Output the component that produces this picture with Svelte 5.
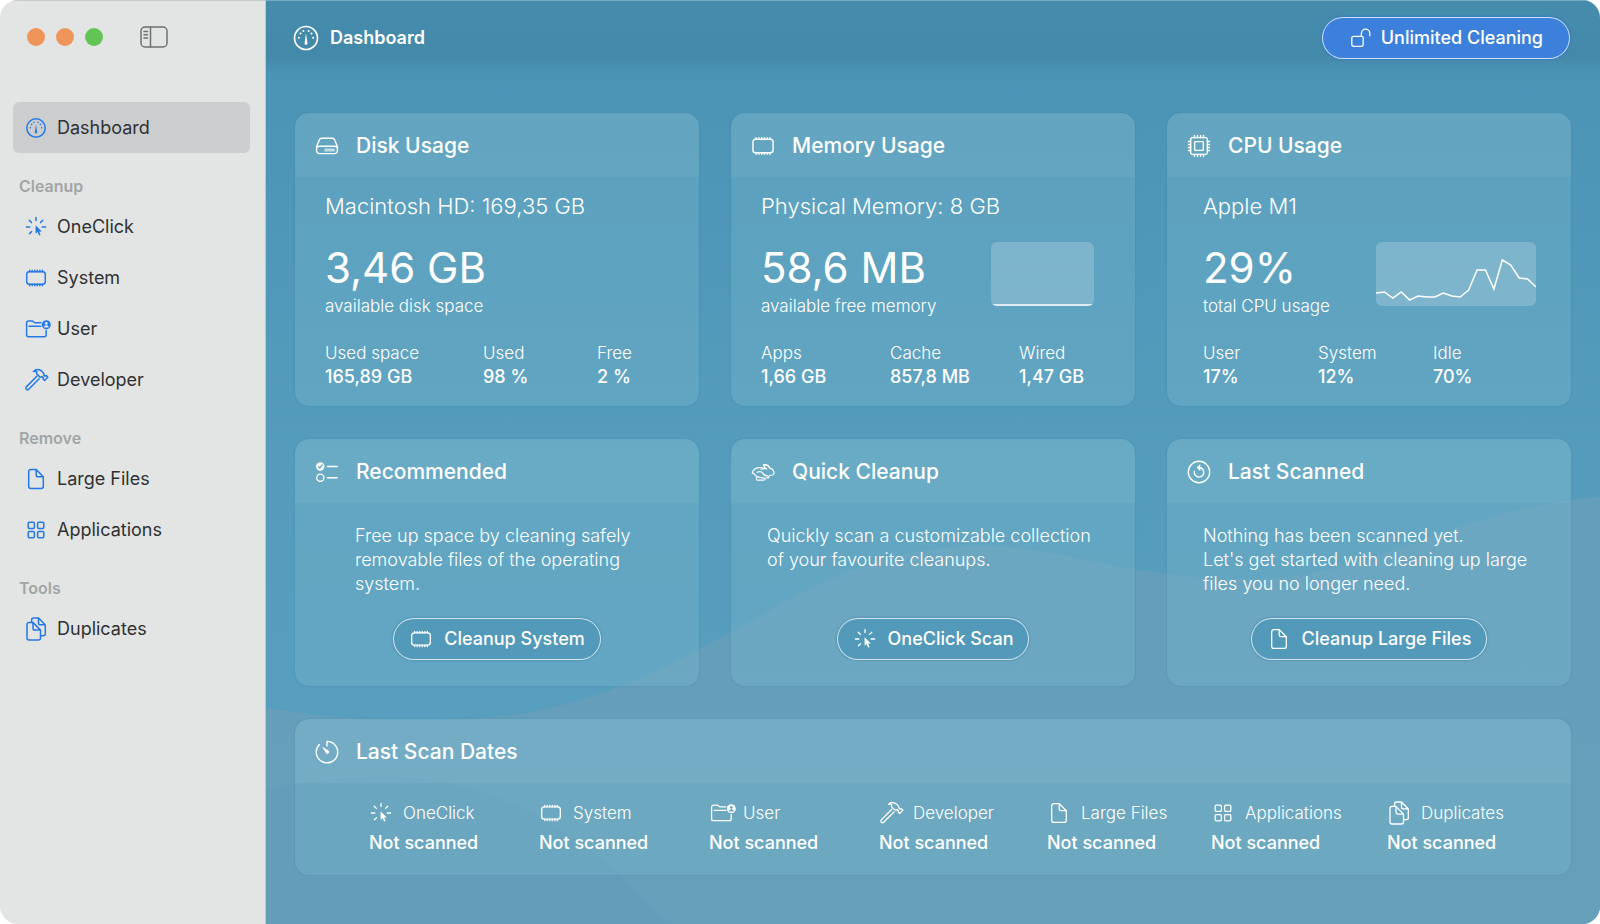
<script>
  const navGroups = [
    { title: '', items: [{ icon: 'gauge', label: 'Dashboard' }] },
    {
      title: 'Cleanup',
      items: [
        { icon: 'click', label: 'OneClick' },
        { icon: 'memory', label: 'System' },
        { icon: 'folder', label: 'User' },
        { icon: 'hammer', label: 'Developer' }
      ]
    },
    {
      title: 'Remove',
      items: [
        { icon: 'doc', label: 'Large Files' },
        { icon: 'apps', label: 'Applications' }
      ]
    },
    { title: 'Tools', items: [{ icon: 'docs', label: 'Duplicates' }] }
  ];

  const usage = [
    {
      id: 'disk',
      icon: 'drive',
      title: 'Disk Usage',
      source: 'Macintosh HD: 169,35 GB',
      value: '3,46 GB',
      caption: 'available disk space',
      stats: [['Used space', '165,89 GB'], ['Used', '98 %'], ['Free', '2 %']]
    },
    {
      id: 'memory',
      icon: 'memory',
      title: 'Memory Usage',
      source: 'Physical Memory: 8 GB',
      value: '58,6 MB',
      caption: 'available free memory',
      stats: [['Apps', '1,66 GB'], ['Cache', '857,8 MB'], ['Wired', '1,47 GB']],
      history: [1, 1]
    },
    {
      id: 'cpu',
      icon: 'cpu',
      title: 'CPU Usage',
      source: 'Apple M1',
      value: '29%',
      caption: 'total CPU usage',
      stats: [['User', '17%'], ['System', '12%'], ['Idle', '70%']],
      history: [13, 14, 8, 14, 6, 10, 9, 9, 13, 10, 9, 16, 36, 36, 17, 46, 41, 28, 27, 19]
    }
  ];

  const actions = [
    {
      id: 'recommended',
      icon: 'checklist',
      title: 'Recommended',
      text: 'Free up space by cleaning safely removable files of the operating system.',
      button: 'Cleanup System',
      buttonIcon: 'memory'
    },
    {
      id: 'quick',
      icon: 'hare',
      title: 'Quick Cleanup',
      text: 'Quickly scan a customizable collection of your favourite cleanups.',
      button: 'OneClick Scan',
      buttonIcon: 'click'
    },
    {
      id: 'last',
      icon: 'rescan',
      title: 'Last Scanned',
      text: "Nothing has been scanned yet.\nLet's get started with cleaning up large files you no longer need.",
      button: 'Cleanup Large Files',
      buttonIcon: 'doc'
    }
  ];

  const scans = navGroups.slice(1).flatMap((group) => group.items);

  let active = $state('Dashboard');

  // values are out of 64, newest sample on the right
  function toPoints(history) {
    const step = 160 / (history.length - 1);
    return history.map((v, i) => `${i * step},${64 - v}`).join(' ');
  }
</script>

{#snippet icon(name)}
  <svg class="icon" viewBox="0 0 24 24" aria-hidden="true">
    {#if name === 'gauge'}
      <circle cx="12" cy="12" r="9.2" />
      <path class="solid" d="M12 8.2l1.1 7.6a1.2 1.2 0 1 1-2.2 0z" />
      <path class="dots" d="M6.3 11.8h.01M7.6 8.4h.01M9.9 6.3h.01M14.1 6.3h.01M16.4 8.4h.01M17.7 11.8h.01" />
    {:else if name === 'click'}
      <path d="M12 2.6v3M5.2 5.2l2.2 2.2M18.8 5.2l-2.2 2.2M2.4 12h3.4M18.2 12h3.4M5.4 18.8l2.2-2.2" />
      <path class="solid" d="M11.6 10.2v8.6l2-1.8 1.5 3.6 1.5-.6-1.5-3.6h2.7z" />
    {:else if name === 'memory'}
      <rect x="2.7" y="5.8" width="18.6" height="12.4" rx="2.6" />
      <path d="M5.6 5.8V4.3M8.2 5.8V4.3M10.8 5.8V4.3M13.3 5.8V4.3M15.9 5.8V4.3M18.4 5.8V4.3M5.6 18.2v1.5M8.2 18.2v1.5M10.8 18.2v1.5M13.3 18.2v1.5M15.9 18.2v1.5M18.4 18.2v1.5" />
    {:else if name === 'folder'}
      <path d="M17 5.8H11c-1.200 0-1.600-1.700-3-1.700H4.600a2 2 0 0 0-2 2v11.600a2 2 0 0 0 2 2h15.600a2 2 0 0 0 2-2V13.600M5 9.300h11.800" />
      <circle class="solid" cx="22.300" cy="7.800" r="4.500" />
      <circle class="cut" cx="22.300" cy="6.400" r="1.400" />
      <path class="cut" d="M19.800 10.600c.3-1.700 1.300-2.300 2.500-2.300s2.200.6 2.500 2.300z" />
    {:else if name === 'hammer'}
      <path d="M12.800 8.200L2.300 18.900a1.700 1.700 0 0 0 0 2.300 1.700 1.700 0 0 0 2.400 0L15.200 10.800" />
      <path d="M9.400 3.400c2.600-2.700 6.200-2.300 8.500 0l1.600 1.700c.6.600.5 1.400.3 2l1.500 1.100 1-.6 1.600 1.600-3.300 3.300-1.500-1.500.4-1.100-1.400-1.300c-.9.500-1.700.8-2.600 0l-2.600-2.500c-.8-.9-.4-1.600 0-2.400-1.300-.7-2.300-.7-3.500-.3z" />
    {:else if name === 'doc'}
      <path d="M12.200 2.600H6.900a2.200 2.200 0 0 0-2.200 2.200v14.400a2.200 2.200 0 0 0 2.200 2.200h10.200a2.200 2.200 0 0 0 2.200-2.200V9.700z" />
      <path d="M12.200 2.600v5.300c0 1.200.6 1.800 1.800 1.800h5.300" />
    {:else if name === 'apps'}
      <rect x="4.200" y="4.200" width="6.200" height="6.200" rx="1.200" />
      <rect x="13.600" y="4.200" width="6.200" height="6.200" rx="1.200" />
      <rect x="4.200" y="13.600" width="6.200" height="6.200" rx="1.200" />
      <rect x="13.600" y="13.600" width="6.200" height="6.200" rx="1.200" />
    {:else if name === 'docs'}
      <path d="M8.800 5.400H5a2 2 0 0 0-2 2V21a2 2 0 0 0 2 2h9.500a2 2 0 0 0 2-2v-7.900z" />
      <path d="M9 5.600v5.700c0 1.200.6 1.800 1.800 1.800h5.500" />
      <path d="M7.600 5.200V3a2 2 0 0 1 2-2h4.900l6.800 7v8.700a2 2 0 0 1-2 2h-2.600M14.500 1.200v4.700c0 1.200.6 1.900 1.800 1.900h4.800" />
    {:else if name === 'drive'}
      <path d="M6.900 4.900h10.200c1 0 1.500.4 1.900 1.300l2.600 6.200v4a2.600 2.600 0 0 1-2.600 2.600H5a2.600 2.600 0 0 1-2.600-2.600v-4L5 6.200c.4-.9.900-1.300 1.900-1.300z" />
      <path d="M2.600 13.400c.6-.9 1.400-1.200 2.400-1.200h14c1 0 1.800.3 2.400 1.200" />
      <path class="solid faded" d="M9.600 14.400h9.600v2.600H9.600z" />
    {:else if name === 'cpu'}
      <rect x="4.300" y="4.300" width="15.400" height="15.400" rx="1.600" />
      <rect x="8" y="8" width="8" height="8" rx=".6" />
      <path d="M7.800 4.300v-2M10.600 4.300v-2M13.400 4.300v-2M16.200 4.300v-2M7.800 21.700v-2M10.600 21.700v-2M13.400 21.700v-2M16.200 21.700v-2M4.300 7.800h-2M4.300 10.600h-2M4.300 13.400h-2M4.300 16.200h-2M21.700 7.800h-2M21.700 10.600h-2M21.700 13.400h-2M21.700 16.200h-2" />
    {:else if name === 'checklist'}
      <circle class="solid" cx="5.800" cy="6.900" r="3.900" />
      <path class="tick" d="M4.200 7.100l1.200 1.300 2.100-3" />
      <circle cx="5.800" cy="17.300" r="3.300" />
      <path d="M12.400 6.900h9M12.400 17.300h9" />
    {:else if name === 'hare'}
      <g class="fine">
        <path d="M2.200 12.800c.5-3.100 3.200-4.500 6.200-4.800 2-.2 3.300.2 4.700 1 .8-.1 1.700 0 2.400.2-1.700-.8-2.900-2-3.200-3.700 2.500-.5 4.800 1 6 3 2.300.3 3.500 2.100 3.900 4.200.2 1.500-1.100 2.300-2.500 2.300-1 0-1.700.4-2.300 1.100l-.3 1.300h-2.400" />
        <path d="M13.300 5.400c1.700-.9 3.900.4 4.900 2.700" />
        <path d="M2.200 12.800c1.200.1 1.500.7 2.400 1.800 1 1.300 2 1.900 3.600 2.200l4.600.8c1.200.3 1.700 1.900-.2 1.900H7c-1.200 0-1.600-1.500-.6-2.500" />
        <path d="M6.600 12.200c2.200-1.300 4.600-.4 5.500 1.300.7 1.500 2 2.100 4.200 2M12.800 9c-1 0-1.700.1-2.500.3" />
      </g>
    {:else if name === 'rescan'}
      <circle cx="12" cy="12" r="9.900" />
      <path d="M7.700 11.600a4.400 4.400 0 1 0 4.600-3.700h-1.100M12.800 5.700l-2.100 2.200 2.100 2.100" />
    {:else if name === 'timer'}
      <path d="M12 6.400V2.200a9.900 9.900 0 1 1-7 2.900" />
      <path class="solid" d="M7.300 7l5.900 3.700a1.600 1.600 0 1 1-2.200 2.200z" />
    {:else if name === 'unlock'}
      <rect x="2.800" y="10.300" width="11.400" height="10" rx="1.800" />
      <path d="M12.400 10.200V7.400a4.200 4.200 0 0 1 8.400 0v2.400" />
    {/if}
  </svg>
{/snippet}

<div class="window">
  <aside class="sidebar">
    <div class="titlebar">
      <button class="light close" aria-label="Close"></button>
      <button class="light minimize" aria-label="Minimize"></button>
      <button class="light zoom" aria-label="Zoom"></button>
      <button class="toggle" aria-label="Toggle sidebar">
        <svg width="28" height="22" viewBox="0 0 28 22">
          <rect x="1" y="1" width="26" height="20" rx="4" />
          <path d="M10.500 1v20M4 5.500h3.500M4 8.800h3.500M4 12.100h3.500" />
        </svg>
      </button>
    </div>

    <nav>
      {#each navGroups as group}
        {#if group.title}
          <h2>{group.title}</h2>
        {/if}
        <ul>
          {#each group.items as item}
            <li>
              <a
                href="#{item.icon}"
                class:active={active === item.label}
                onclick={() => (active = item.label)}
              >
                {@render icon(item.icon)}
                {item.label}
              </a>
            </li>
          {/each}
        </ul>
      {/each}
    </nav>
  </aside>

  <main>
    <svg class="waves" viewBox="0 0 1334 924" preserveAspectRatio="none" aria-hidden="true">
      <path
        class="wave"
        d="M0 708C80 722 180 724 254 714C340 700 400 666 454 638C530 598 600 546 714 546C800 546 860 579 984 579C1110 579 1180 510 1334 497V924H0z"
      />
      <path class="wave-soft" d="M0 790C100 770 180 770 260 810C330 845 370 890 400 924H0z" />
    </svg>

    <header class="topbar">
      <h1>{@render icon('gauge')}Dashboard</h1>
      <button class="pill upgrade">{@render icon('unlock')}Unlimited Cleaning</button>
    </header>

    <div class="cards">
      {#each usage as card}
        <section class="card {card.id}">
          <h2>{@render icon(card.icon)}{card.title}</h2>
          <div class="usage">
            <p class="source">{card.source}</p>
            <div class="reading">
              <div>
                <p class="value">{card.value}</p>
                <p class="caption">{card.caption}</p>
              </div>
              {#if card.history}
                <svg class="chart" viewBox="0 0 160 64" preserveAspectRatio="none" role="img" aria-label="{card.title} history">
                  <polyline points={toPoints(card.history)} />
                </svg>
              {/if}
            </div>
            <dl>
              {#each card.stats as [label, amount]}
                <div>
                  <dt>{label}</dt>
                  <dd>{amount}</dd>
                </div>
              {/each}
            </dl>
          </div>
        </section>
      {/each}

      {#each actions as card}
        <section class="card {card.id}">
          <h2>{@render icon(card.icon)}{card.title}</h2>
          <div class="action">
            <p>{card.text}</p>
            <button class="pill">{@render icon(card.buttonIcon)}{card.button}</button>
          </div>
        </section>
      {/each}

      <section class="card wide">
        <h2>{@render icon('timer')}Last Scan Dates</h2>
        <dl class="scans">
          {#each scans as scan}
            <div>
              <dt>{@render icon(scan.icon)}{scan.label}</dt>
              <dd>Not scanned</dd>
            </div>
          {/each}
        </dl>
      </section>
    </div>
  </main>
</div>

<style>
  :global(body) {
    background: #fff;
  }

  h1,
  h2,
  p,
  ul,
  dl,
  dd {
    margin: 0;
    padding: 0;
  }

  button {
    padding: 0;
    border: none;
    background: none;
    font: inherit;
    color: inherit;
    cursor: pointer;
  }

  .window {
    display: grid;
    grid-template-columns: 266px 1fr;
    min-height: 100vh;
    border-radius: 18px;
    overflow: hidden;
    font-family: Inter, 'Liberation Sans', sans-serif;
    font-size: 18px;
    line-height: 24px;
  }

  .icon {
    flex: none;
    width: 24px;
    height: 24px;
    overflow: visible;
    fill: none;
    stroke: currentColor;
    stroke-width: 1.3;
    stroke-linecap: round;
    stroke-linejoin: round;
  }

  .icon .solid {
    fill: currentColor;
    stroke: none;
  }

  .icon .faded {
    opacity: 0.6;
  }

  .icon .fine {
    stroke-width: 1.1;
  }

  .icon .dots {
    stroke-width: 1.6;
  }

  .icon .cut {
    fill: var(--surface);
    stroke: none;
  }

  .icon .tick {
    stroke: var(--surface);
  }

  /* Sidebar */
  .sidebar {
    --surface: #e2e5e4;
    box-sizing: border-box;
    padding: 0 15px 0 13px;
    background: #e2e5e4;
    border-right: 1px solid #b4c8d2;
    box-shadow: inset 0 1px #c6cbcc;
    color: #303132;
  }

  .titlebar {
    display: flex;
    align-items: center;
    gap: 11px;
    height: 74px;
    margin-bottom: 28px;
    padding-left: 14px;
  }

  .light {
    width: 18px;
    height: 18px;
    border-radius: 50%;
  }

  .close,
  .minimize {
    background: #f0955a;
  }

  .zoom {
    background: #61c454;
  }

  .toggle {
    display: flex;
    margin-left: 26px;
  }

  .toggle svg {
    fill: none;
    stroke: #6e7072;
    stroke-width: 1.5;
    stroke-linecap: round;
  }

  nav ul {
    list-style: none;
  }

  nav a {
    display: flex;
    align-items: center;
    gap: 9px;
    height: 51px;
    padding-left: 11px;
    border-radius: 6px;
    color: inherit;
    text-decoration: none;
  }

  nav a .icon {
    color: #2478e8;
    stroke-width: 1.5;
  }

  nav a.active {
    background: #cbcdcf;
  }

  nav h2 {
    padding: 21px 6px 3px;
    font-size: 16px;
    font-weight: 600;
    color: #a2a5a6;
  }

  /* Main area */
  main {
    position: relative;
    isolation: isolate;
    background: linear-gradient(#4a92b5, #559cbc 50%, #5a9fbf);
    box-shadow: inset 0 1px #9cc3d3;
    color: #fff;
  }

  .waves {
    position: absolute;
    inset: 0;
    z-index: -1;
    width: 100%;
    height: 100%;
  }

  .wave {
    fill: #679fb9;
    opacity: 0.9;
  }

  .wave-soft {
    fill: #5f99b6;
    opacity: 0.3;
  }

  .topbar {
    display: flex;
    align-items: center;
    justify-content: space-between;
    box-sizing: border-box;
    height: 74px;
    padding: 1px 30px 0 25px;
    background: linear-gradient(rgba(62, 130, 160, 0.4), rgba(62, 130, 160, 0.6) 75%, transparent);
  }

  h1 {
    display: flex;
    align-items: center;
    gap: 9px;
    font-size: 18px;
    font-weight: 600;
  }

  h1 .icon {
    width: 30px;
    height: 30px;
  }

  .pill {
    display: inline-flex;
    align-items: center;
    gap: 11px;
    height: 42px;
    padding: 0 15px;
    border: 1px solid rgba(255, 255, 255, 0.75);
    border-radius: 21px;
    background: #5299ba;
    box-shadow: 0 0 3px #4187a9;
    font-weight: 500;
  }

  .upgrade {
    gap: 8px;
    padding: 0 26px;
    background: #3c80dc;
    box-shadow: 0 0 3px #2a70d8;
  }

  .cards {
    display: grid;
    grid-template-columns: repeat(3, 1fr);
    gap: 33px 32px;
    padding: 39px 29px 48px;
  }

  .card {
    --surface: #68a7c4;
    border-radius: 14px;
    background: rgba(125, 190, 210, 0.3);
    box-shadow: 0 0 2px rgba(40, 110, 145, 0.35);
    overflow: hidden;
  }

  .card h2 {
    display: flex;
    align-items: center;
    gap: 16px;
    box-sizing: border-box;
    height: 64px;
    padding: 2px 19px 0;
    background: rgba(255, 255, 255, 0.05);
    font-size: 21px;
    font-weight: 500;
  }

  .card h2 .icon {
    width: 26px;
    height: 26px;
  }

  .usage {
    padding: 14px 30px 17px;
  }

  .cpu .usage {
    padding-left: 36px;
  }

  .source {
    margin-bottom: 21px;
    font-size: 22px;
    font-weight: 300;
    line-height: 30px;
  }

  .reading {
    display: flex;
    justify-content: space-between;
    align-items: flex-start;
    margin-bottom: 23px;
  }

  .value {
    font-size: 42px;
    line-height: 52px;
  }

  .caption {
    font-size: 17px;
    font-weight: 300;
  }

  .chart {
    width: 103px;
    height: 64px;
    margin-right: 11px;
    border-radius: 6px;
    background: rgba(255, 255, 255, 0.2);
  }

  .cpu .chart {
    width: 160px;
    margin-right: 5px;
  }

  .chart polyline {
    fill: none;
    stroke: #fff;
    stroke-width: 1.5;
    vector-effect: non-scaling-stroke;
  }

  .usage dl {
    display: grid;
  }

  .disk dl {
    grid-template-columns: 158fr 114fr 72fr;
  }

  .memory dl {
    grid-template-columns: 129fr 129fr 86fr;
  }

  .cpu dl {
    grid-template-columns: 115fr 115fr 108fr;
  }

  dt {
    font-size: 17px;
    font-weight: 300;
  }

  dd {
    font-weight: 500;
  }

  .action {
    display: flex;
    flex-direction: column;
    align-items: center;
    padding: 21px 36px 26px;
  }

  .action p {
    width: 100%;
    min-height: 72px;
    margin-bottom: 22px;
    font-weight: 300;
    white-space: pre-line;
  }

  .recommended .action {
    padding-left: 60px;
    padding-right: 60px;
  }

  .wide {
    grid-column: 1 / -1;
  }

  .scans {
    display: grid;
    grid-template-columns: repeat(3, 170fr) 168fr 164fr 176fr 120fr;
    padding: 16px 64px 20px 74px;
  }

  .scans dt {
    display: flex;
    align-items: center;
    gap: 10px;
    height: 28px;
  }

  .scans dd {
    margin-top: 4px;
  }
</style>
